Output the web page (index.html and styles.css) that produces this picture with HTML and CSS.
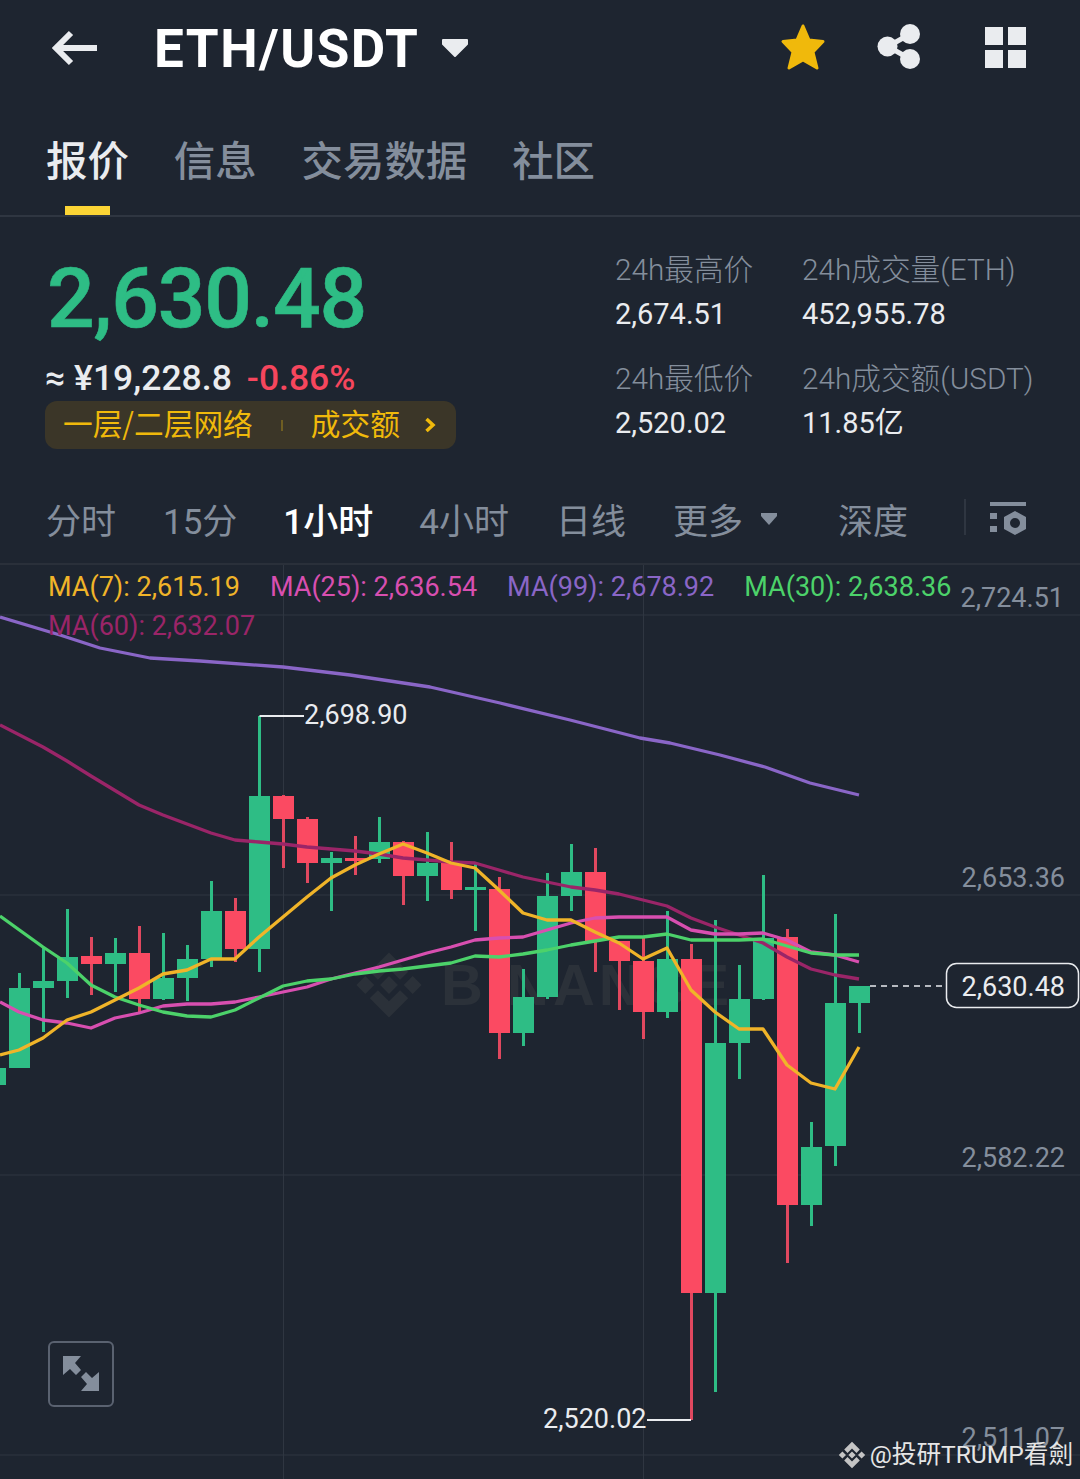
FILE: index.html
```html
<!DOCTYPE html>
<html lang="zh">
<head>
<meta charset="utf-8">
<title>ETH/USDT</title>
<link rel="stylesheet" href="styles.css">
</head>
<body>
<div class="app">
  <header class="topbar">
    <svg class="back" viewBox="0 0 46 36"><path d="M19 3 4 18l15 15M4 18h41"/></svg>
    <h1 class="pair">ETH/USDT</h1>
    <svg class="pair-caret" viewBox="0 0 28 20"><path d="M2 2H26V6L14 18 2 6Z"/></svg>
    <div class="top-icons">
      <svg class="star" viewBox="0 0 46 48"><path d="M23 3 29 17 43 18.500 33 29 37 45 23 37 9 45 13 29 3 18.500 17 17Z"/></svg>
      <svg class="share" viewBox="0 0 44 46"><path class="share-line" d="M33 10 11 22.500 33 35"/><circle cx="33" cy="10" r="10"/><circle cx="10.500" cy="22.500" r="10"/><circle cx="33" cy="35" r="10"/></svg>
      <svg class="grid-icon" viewBox="0 0 41 41"><path d="M0 0H18V18H0ZM23 0H41V18H23ZM0 23H18V41H0ZM23 23H41V41H23Z"/></svg>
    </div>
  </header>

  <nav class="tabs">
    <span class="tab tab-active">报价</span>
    <span class="tab">信息</span>
    <span class="tab">交易数据</span>
    <span class="tab">社区</span>
  </nav>

  <section class="summary">
    <div class="quote">
      <div class="price">2,630.48</div>
      <div class="sub"><span class="fiat">≈ ¥19,228.8</span><span class="change">-0.86%</span></div>
      <div class="pill">
        <span>一层/二层网络</span>
        <i class="pill-sep"></i>
        <span>成交额</span>
        <svg class="pill-chev" viewBox="0 0 12 16"><path d="M2.500 2 9 8l-6.500 6"/></svg>
      </div>
    </div>
    <div class="stats">
      <div class="stat"><div class="stat-label">24h最高价</div><div class="stat-value">2,674.51</div></div>
      <div class="stat"><div class="stat-label">24h成交量(ETH)</div><div class="stat-value">452,955.78</div></div>
      <div class="stat"><div class="stat-label">24h最低价</div><div class="stat-value">2,520.02</div></div>
      <div class="stat"><div class="stat-label">24h成交额(USDT)</div><div class="stat-value">11.85亿</div></div>
    </div>
  </section>

  <nav class="periods">
    <span class="period p1">分时</span>
    <span class="period p2">15分</span>
    <span class="period p3 period-active">1小时</span>
    <span class="period p4">4小时</span>
    <span class="period p5">日线</span>
    <span class="period p6">更多</span>
    <svg class="more-caret" viewBox="0 0 18 14"><path d="M1 1H17V4L9 13 1 4Z"/></svg>
    <span class="period p7">深度</span>
    <i class="period-sep"></i>
    <svg class="settings" viewBox="0 0 38 36"><path d="M0 2H36V6H0ZM0 13H7V19H0ZM0 26H7V32H0Z"/><path fill-rule="evenodd" d="M25 11 36 17V29L25 35 14 29V17ZM25 18A5 5 0 1 0 25.010 28 5 5 0 1 0 25 18Z"/></svg>
  </nav>

  <main class="chart">
    <svg class="plot" viewBox="0 565 1080 914">
      <path class="grid" d="M0 615H1080M0 895H1080M0 1175H1080M0 1455H1080M283.500 565V1479M643.500 565V1479"/>
      <g class="wm-logo" transform="translate(352 948) scale(.74)">
        <path d="M50 6 76 32 65 43 50 28 35 43 24 32ZM50 94 76 68 65 57 50 72 35 57 24 68ZM6 50 18 38 30 50 18 62ZM94 50 82 38 70 50 82 62ZM50 38 62 50 50 62 38 50Z"/>
      </g>
      <text class="wm-text" x="441" y="1005">BINANCE</text>

      <path class="wick up" d="M19.500 973V1068M43.500 948V1032M67.500 909V998M115.500 938V992M163.500 933V1000M187.500 945V1001M211.500 881V967M259.500 716V972M331.500 852V911M379.500 817V863M427.500 832V901M475.500 863V931M523.500 969V1046M547.500 873V999M571.500 844V911M667.500 911V1018M715.500 920V1392M739.500 965V1079M763.500 875V1000M811.500 1122V1226M835.500 914V1166M859.500 986V1033"/>
      <path class="wick dn" d="M91.500 937V995M139.500 926V1012M235.500 898V962M283.500 795V868M307.500 817V883M355.500 836V875M403.500 841V905M451.500 842V899M499.500 877V1059M595.500 848V972M619.500 941V1010M643.500 937V1039M691.500 944V1420M787.500 929V1263"/>
      <path class="body up" d="M-5 1068H6V1085H-5ZM9 988H30V1068H9ZM33 981H54V988H33ZM57 957H78V981H57ZM105 953H126V964H105ZM153 978H174V999H153ZM177 959H198V978H177ZM201 911H222V959H201ZM249 796H270V949H249ZM321 858H342V863H321ZM369 842H390V859H369ZM417 863H438V876H417ZM465 887H486V890H465ZM513 997H534V1033H513ZM537 896H558V997H537ZM561 872H582V896H561ZM657 959H678V1012H657ZM705 1043H726V1293H705ZM729 999H750V1043H729ZM753 938H774V999H753ZM801 1147H822V1205H801ZM825 1003H846V1146H825ZM849 986H870V1003H849Z"/>
      <path class="body dn" d="M81 956H102V964H81ZM129 953H150V999H129ZM225 911H246V949H225ZM273 796H294V819H273ZM297 819H318V863H297ZM345 858H366V861H345ZM393 842H414V876H393ZM441 863H462V890H441ZM489 889H510V1033H489ZM585 872H606V941H585ZM609 941H630V961H609ZM633 961H654V1012H633ZM681 959H702V1293H681ZM777 937H798V1205H777Z"/>

      <polyline class="ma ma99" points="0,617 60,635 100,648 150,658 200,661 283,667 350,675 430,687 500,703 570,720 640,738 670,743 720,755 765,767 810,783 859,795"/>
      <polyline class="ma ma60" points="0,725 43,747 67,761 91,776 139,805 163,815 187,824 211,833 235,840 259,842 283,844 307,847 331,849 355,851 379,854 403,858 427,860 451,862 475,863 499,870 523,877 547,882 571,887 595,890 619,894 643,900 667,906 691,918 715,927 739,935 763,943 787,957 811,969 835,975 859,979"/>
      <polyline class="ma ma25" points="0,1002 19,1012 43,1020 67,1023 91,1028 115,1018 139,1013 163,1006 187,1004 211,1004 235,1002 259,997 283,992 307,987 331,979 355,973 379,967 403,960 427,953 451,947 475,940 499,938 523,937 547,930 571,923 595,918 619,917 643,917 667,917 691,930 715,934 739,934 763,933 787,940 811,952 835,955 859,962"/>
      <polyline class="ma ma30" points="0,916 43,947 67,963 91,985 115,997 139,1005 163,1012 187,1016 211,1017 235,1010 259,998 283,986 307,981 331,979 355,974 379,971 403,969 427,966 451,963 475,956 499,957 523,954 547,950 571,945 595,941 619,937 643,937 667,934 691,940 715,940 739,940 763,939 787,946 811,953 835,955 859,955"/>
      <polyline class="ma ma7" points="0,1055 19,1050 43,1038 67,1020 91,1012 115,1000 139,988 163,974 187,970 211,959 235,959 259,937 283,917 307,897 331,878 355,865 379,854 403,844 427,853 451,863 475,868 499,890 523,913 547,920 571,920 595,932 619,943 643,959 667,948 691,990 715,1012 739,1029 763,1029 787,1065 811,1083 835,1089 859,1047"/>

      <path class="leader" d="M259.500 716H304M647 1420H691"/>
      <text class="extreme" x="304" y="724">2,698.90</text>
      <text class="extreme" x="543" y="1428">2,520.02</text>

      <text class="axis" x="1064" y="607">2,724.51</text>
      <text class="axis" x="1065" y="887">2,653.36</text>
      <text class="axis" x="1065" y="1167">2,582.22</text>
      <text class="axis" x="1065" y="1447">2,511.07</text>

      <path class="dash" d="M870 986H946"/>
      <rect class="last-box" x="946.500" y="963.500" width="132" height="44" rx="10"/>
      <text class="last-text" x="1065" y="996">2,630.48</text>
    </svg>

    <div class="legend">
      <span class="l7">MA(7): 2,615.19</span>
      <span class="l25">MA(25): 2,636.54</span>
      <span class="l99">MA(99): 2,678.92</span>
      <span class="l30">MA(30): 2,638.36</span>
      <span class="l60">MA(60): 2,632.07</span>
    </div>

    <button class="expand" type="button" aria-label="expand">
      <svg viewBox="0 0 66 66"><path d="M15 15H33L27 22 33 29 28 34 22 28 15 34ZM51 50H33L39 43 33 36 38 31 44 37 51 31Z"/></svg>
    </button>

    <div class="credit">
      <svg viewBox="0 0 100 100"><path d="M50 6 76 32 65 43 50 28 35 43 24 32ZM50 94 76 68 65 57 50 72 35 57 24 68ZM6 50 18 38 30 50 18 62ZM94 50 82 38 70 50 82 62ZM50 38 62 50 50 62 38 50Z"/></svg>
      <span>@投研TRUMP看劍</span>
    </div>
  </main>
</div>
</body>
</html>
```
FILE: styles.css
```css
* { box-sizing: border-box; }
html, body { margin: 0; padding: 0; background: #1e2530; }
body {
  width: 1080px;
  height: 1479px;
  overflow: hidden;
  font-family: Roboto, "Noto Sans CJK SC", sans-serif;
  color: #eaecef;
}
.app { display: flex; flex-direction: column; width: 1080px; height: 1479px; }

/* top bar */
.topbar { display: flex; align-items: center; height: 95px; padding-left: 52px; flex: none; }
.back { width: 46px; height: 36px; flex: none; }
.back path { fill: none; stroke: #eaecef; stroke-width: 6; }
.pair { margin: 4px 0 0 56px; font-size: 53px; line-height: 1; font-weight: 700; color: #fff; letter-spacing: 1.500px; }
.pair-caret { width: 28px; height: 20px; margin-left: 22px; flex: none; }
.pair-caret path { fill: #eaecef; stroke: #eaecef; stroke-width: 2; stroke-linejoin: round; }
.top-icons { display: flex; align-items: center; margin-left: auto; padding-right: 54px; gap: 51px; }
.top-icons svg { flex: none; display: block; }
.star { width: 46px; height: 48px; margin-bottom: 2px; }
.star path { fill: #f0b90b; stroke: #f0b90b; stroke-width: 3; stroke-linejoin: round; }
.share { width: 44px; height: 46px; margin-bottom: 1px; }
.share circle { fill: #eaecef; }
.share-line { fill: none; stroke: #eaecef; stroke-width: 5; }
.grid-icon { width: 41px; height: 41px; margin-left: 13px; margin-bottom: 1px; }
.grid-icon path { fill: #eaecef; }

/* tabs */
.tabs { display: flex; gap: 45px; height: 122px; padding: 38px 0 0 46px; border-bottom: 2px solid #2f3641; flex: none; }
.tab { position: relative; font-size: 41.400px; line-height: 50px; height: 50px; color: #848e9c; font-weight: 500; font-family: "Noto Sans CJK SC", sans-serif; }
.tab-active { color: #eaecef; }
.tab-active::after { content: ""; position: absolute; left: 19px; width: 45px; bottom: -32px; height: 9px; background: #fcd535; }

/* summary */
.summary { display: flex; height: 246px; padding-left: 45px; flex: none; }
.quote { width: 570px; flex: none; }
.price { margin: 42px 0 0 2px; font-size: 84px; line-height: 80px; font-weight: 500; color: #2ebd85; letter-spacing: -1.200px; -webkit-text-stroke: .6px #2ebd85; }
.sub { display: flex; gap: 15px; margin-top: 19px; font-size: 35.500px; line-height: 41px; font-weight: 500; }
.fiat { color: #eaecef; }
.change { color: #f6465d; }
.pill { display: flex; align-items: center; width: 411px; height: 48px; margin-top: 2px; padding: 0 0 4px 18px; border-radius: 12px; background: #3b3628; color: #f0b90b; font-family: "Noto Sans CJK SC", sans-serif; font-size: 29.700px; line-height: 44px; }
.pill-sep { width: 2px; height: 11px; margin: 4px 28px 0; background: #6f5e22; }
.pill-chev { width: 12px; height: 16px; margin: 4px 0 0 24px; flex: none; }
.pill-chev path { fill: none; stroke: #f0b90b; stroke-width: 3.500; }
.stats { display: grid; grid-template-columns: 187px 1fr; grid-auto-rows: 109px; padding-top: 33px; }
.stat-label { font-size: 29.700px; line-height: 40px; color: #848e9c; font-weight: 300; white-space: nowrap; font-family: Roboto, "Noto Sans CJK SC", sans-serif; }
.stat-value { margin-top: 6px; font-size: 29px; line-height: 36px; color: #eaecef; white-space: nowrap; }

/* periods */
.periods { position: relative; display: flex; align-items: center; height: 102px; padding: 20px 0 0 46px; border-bottom: 2px solid #2a303a; flex: none; font-size: 35px; font-family: Roboto, "Noto Sans CJK SC", sans-serif; }
.period { color: #848e9c; white-space: nowrap; line-height: 50px; font-weight: 400; }
.period-active { color: #fff; font-weight: 500; }
.p2 { margin-left: 47px; }
.p3 { margin-left: 46px; }
.p4 { margin-left: 46px; }
.p5 { margin-left: 47px; }
.p6 { margin-left: 47px; }
.more-caret { width: 18px; height: 14px; margin: 0 0 8px 17px; flex: none; }
.more-caret path { fill: #848e9c; }
.p7 { margin-left: 60px; }
.period-sep { width: 2px; height: 36px; margin-left: 56px; margin-bottom: 12px; background: #2f3641; }
.settings { width: 38px; height: 36px; margin-left: 24px; margin-bottom: 10px; flex: none; }
.settings path { fill: #848e9c; }

/* chart */
.chart { position: relative; flex: 1; overflow: hidden; }
.plot { position: absolute; left: 0; top: 0; width: 1080px; height: 914px; display: block; }
.grid { fill: none; stroke: #2f3641; stroke-width: 1; }
.wm-logo path { fill: #2b3139; }
.wm-text { fill: #2b3139; font-family: "Liberation Sans", sans-serif; font-weight: 700; font-size: 58px; letter-spacing: 4px; }
.wick { fill: none; stroke-width: 3; }
.wick.up { stroke: #2ebd85; }
.wick.dn { stroke: #e0485f; }
.body.up { fill: #2ebd85; }
.body.dn { fill: #fb4a62; }
.ma { fill: none; stroke-width: 3.300; stroke-linejoin: round; }
.ma7 { stroke: #f0b429; }
.ma25 { stroke: #d84fb0; }
.ma99 { stroke: #8a66c7; }
.ma30 { stroke: #4cd26a; }
.ma60 { stroke: #9a2568; }
.leader { fill: none; stroke: #eaecef; stroke-width: 2; }
.extreme { fill: #eaecef; font-size: 27px; }
.axis { fill: #848e9c; font-size: 27px; text-anchor: end; font-weight: 400; }
.dash { fill: none; stroke: #eaecef; stroke-width: 1.500; stroke-dasharray: 6 5; }
.last-box { fill: #1e2530; stroke: #eaecef; stroke-width: 1.500; }
.last-text { fill: #eaecef; font-size: 27px; text-anchor: end; }

.legend { position: absolute; left: 48px; top: 0; width: 920px; display: flex; flex-wrap: wrap; column-gap: 30px; font-size: 27px; line-height: 39px; padding-top: 3px; }
.l7 { color: #f0b429; }
.l25 { color: #d84fb0; }
.l99 { color: #8a66c7; }
.l30 { color: #4cd26a; }
.l60 { color: #9a2568; }

.expand { position: absolute; left: 48px; top: 776px; width: 66px; height: 66px; padding: 0; background: none; border: 2px solid #5a6270; border-radius: 6px; }
.expand svg { display: block; position: absolute; left: -2px; top: -2px; width: 66px; height: 66px; }
.expand path { fill: #848e9c; }

.credit { position: absolute; right: 7px; bottom: 9px; display: flex; align-items: center; gap: 3px; font-size: 24.600px; line-height: 30px; color: #e6e6e6; font-family: Roboto, "Noto Sans CJK TC", sans-serif; }
.credit svg { width: 30px; height: 30px; flex: none; }
.credit path { fill: #c4c4c4; }
```
